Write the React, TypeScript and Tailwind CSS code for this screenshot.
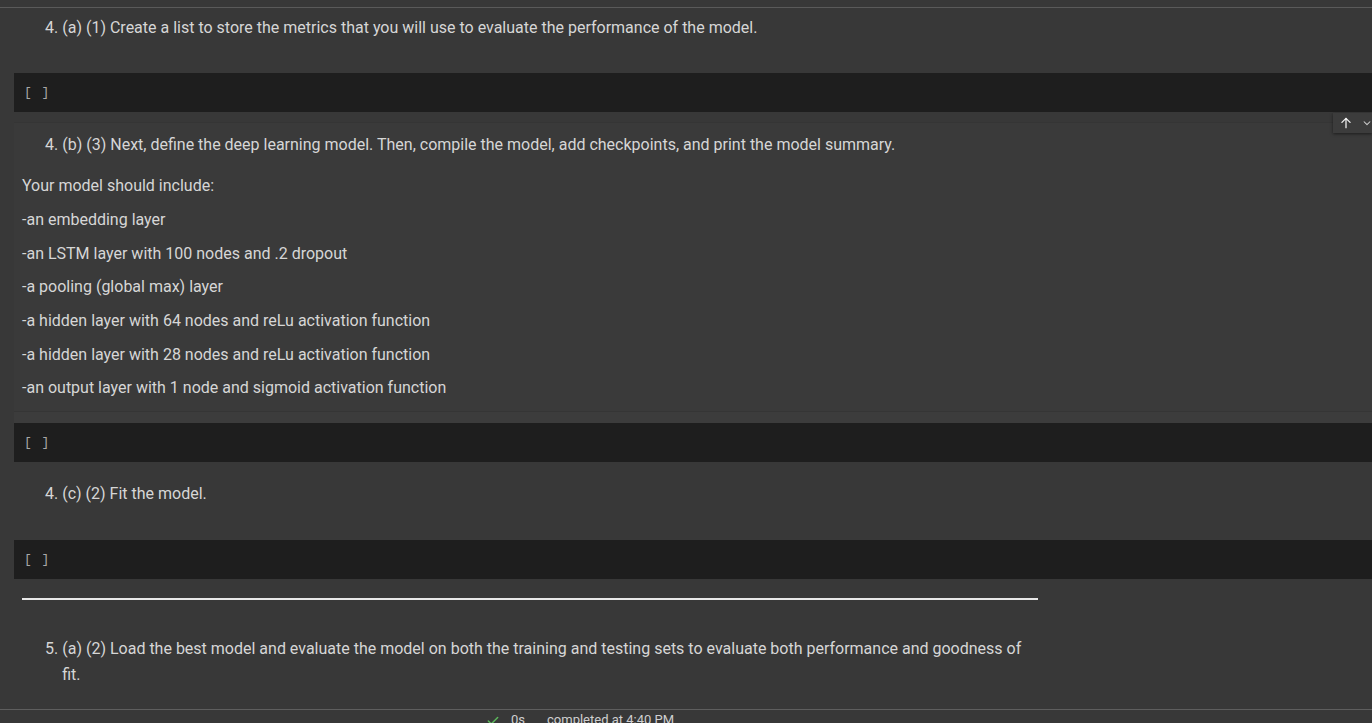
import React from 'react'

const font = { fontFamily: 'Roboto, "Noto Sans", sans-serif' }

function CodeCell() {
  return (
    <div className="ml-[14px] h-[39px] bg-[#1e1e1e] flex items-center pl-[10px] shrink-0">
      <span className="font-['Liberation_Mono',monospace] text-[13px] text-[#a8a8a8] tracking-[1px]">[ ]</span>
    </div>
  )
}

function Heading({ label, children }: { label: string; children: React.ReactNode }) {
  return (
    <div className="flex pl-[45px] pr-[338px] text-[16px] leading-[26px] text-[#d6d6d6]">
      <span className="shrink-0 pr-[4px]">{label}</span>
      <span>{children}</span>
    </div>
  )
}

const items = [
  '-an embedding layer',
  '-an LSTM layer with 100 nodes and .2 dropout',
  '-a pooling (global max) layer',
  '-a hidden layer with 64 nodes and reLu activation function',
  '-a hidden layer with 28 nodes and reLu activation function',
  '-an output layer with 1 node and sigmoid activation function',
]

export default function App() {
  return (
    <div className="w-[1372px] h-[723px] bg-[#383838] overflow-hidden flex flex-col relative" style={font}>
      {/* top edge */}
      <div className="h-[7px] shrink-0" />
      <div className="h-px bg-[#5a5a5a] shrink-0" />

      {/* 4a markdown */}
      <div className="h-[65px] pt-[7px] shrink-0">
        <Heading label="4.">(a) (1) Create a list to store the metrics that you will use to evaluate the performance of the model.</Heading>
      </div>
      <CodeCell />

      {/* 4b markdown (selected) */}
      <div className="h-[10px] shrink-0" />
      <div className="ml-[14px] h-[290px] bg-[#3a3a3a] border-y border-[#353535] relative shrink-0">
        <div className="absolute right-0 -top-[10px] h-[20px] w-[39px] bg-[#3c3c3c] shadow-[0_1px_3px_rgba(0,0,0,0.5)] flex items-center pl-[6px] gap-[9px]">
          <svg width="14" height="14" viewBox="0 0 24 24" fill="none" stroke="#f0f0f0" strokeWidth="2.2" strokeLinecap="round" strokeLinejoin="round">
            <path d="M12 20V4" />
            <path d="M5 11l7-7 7 7" />
          </svg>
          <svg width="10" height="10" viewBox="0 0 24 24" fill="none" stroke="#d0d0d0" strokeWidth="2.5" strokeLinecap="round" strokeLinejoin="round">
            <path d="M5 9l7 7 7-7" />
          </svg>
        </div>
        <div className="pt-[9px] -ml-[14px]">
          <Heading label="4.">(b) (3) Next, define the deep learning model. Then, compile the model, add checkpoints, and print the model summary.</Heading>
        </div>
        <div className="pt-[11px] pl-[8px] text-[16px] text-[#d6d6d6] flex flex-col">
          <div className="leading-[33px] h-[34px]">Your model should include:</div>
          {items.map((t) => (
            <div key={t} className="leading-[33px] h-[33.7px]">{t}</div>
          ))}
        </div>
      </div>
      <div className="ml-[14px] h-[11px] bg-[#3c3c3c] shrink-0" />
      <CodeCell />

      {/* 4c */}
      <div className="h-[78px] pt-[19px] shrink-0">
        <Heading label="4.">(c) (2) Fit the model.</Heading>
      </div>
      <CodeCell />

      {/* divider + 5a */}
      <div className="h-[19px] shrink-0" />
      <div className="ml-[22px] w-[1016px] h-[2px] bg-[#e8e8e8] shrink-0" />
      <div className="pt-[36px] shrink-0">
        <Heading label="5.">(a) (2) Load the best model and evaluate the model on both the training and testing sets to evaluate both performance and goodness of fit.</Heading>
      </div>

      {/* status bar */}
      <div className="absolute left-0 right-0 top-[709px] h-[14px] border-t border-[#5e5e5e] bg-[#383838]">
        <div className="absolute left-[486px] top-[1px] flex items-center text-[13px] text-[#cfcfcf] leading-[16px]">
          <svg width="14" height="14" viewBox="0 0 24 24" fill="none" stroke="#5cb85c" strokeWidth="2.5" strokeLinecap="round" strokeLinejoin="round" className="mt-[3px]">
            <path d="M4 12l5 5L20 6" />
          </svg>
          <span className="ml-[11px]">0s</span>
          <span className="ml-[22px]">completed at 4:40 PM</span>
        </div>
      </div>
    </div>
  )
}
